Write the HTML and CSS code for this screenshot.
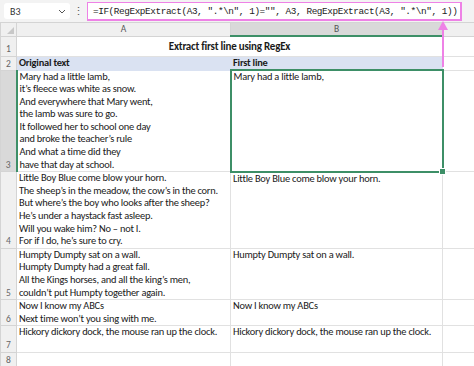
FILE: index.html
```html
<!DOCTYPE html>
<html lang="en">
<head>
    <meta charset="UTF-8">
    <title>Extract first line using RegEx</title>
    <link rel="stylesheet" href="styles.css">
</head>
<body>
    <div class="sheet">
        <div class="formula-bar">
            <div class="name-box">
                <span>B3</span>
                <svg class="chevron" width="8" height="5" viewBox="0 0 8 5"><path d="M1 1l3 3 3-3" fill="none" stroke="#555" stroke-width="1"/></svg>
            </div>
            <div class="dots">&#8942;</div>
            <div class="formula">=IF(RegExpExtract(A3, ".*\n", 1)="", A3, RegExpExtract(A3, ".*\n", 1))</div>
        </div>

        <table class="grid">
            <colgroup>
                <col class="c-num">
                <col class="c-a">
                <col class="c-b">
                <col class="c-c">
            </colgroup>
            <thead>
                <tr class="col-heads">
                    <th class="corner"><span class="tri"></span></th>
                    <th>A</th>
                    <th class="sel-col">B</th>
                    <th></th>
                </tr>
            </thead>
            <tbody>
                <tr class="r1">
                    <td class="num">1</td>
                    <td colspan="2" class="title">Extract first line using RegEx</td>
                    <td></td>
                </tr>
                <tr class="r2">
                    <td class="num">2</td>
                    <td class="head">Original text</td>
                    <td class="head">First line</td>
                    <td></td>
                </tr>
                <tr class="r3">
                    <td class="num sel-row">3</td>
                    <td>Mary had a little lamb,<br>it’s fleece was white as snow.<br>And everywhere that Mary went,<br>the lamb was sure to go.<br>It followed her to school one day<br>and broke the teacher’s rule<br>And what a time did they<br>have that day at school.</td>
                    <td class="active">Mary had a little lamb,<span class="handle"></span></td>
                    <td></td>
                </tr>
                <tr>
                    <td class="num">4</td>
                    <td>Little Boy Blue come blow your horn.<br>The sheep’s in the meadow, the cow’s in the corn.<br>But where’s the boy who looks after the sheep?<br>He’s under a haystack fast asleep.<br>Will you wake him? No – not I.<br>For if I do, he’s sure to cry.</td>
                    <td>Little Boy Blue come blow your horn.</td>
                    <td></td>
                </tr>
                <tr>
                    <td class="num">5</td>
                    <td>Humpty Dumpty sat on a wall.<br>Humpty Dumpty had a great fall.<br>All the Kings horses, and all the king’s men,<br>couldn’t put Humpty together again.</td>
                    <td>Humpty Dumpty sat on a wall.</td>
                    <td></td>
                </tr>
                <tr>
                    <td class="num">6</td>
                    <td>Now I know my ABCs<br>Next time won’t you sing with me.</td>
                    <td>Now I know my ABCs</td>
                    <td></td>
                </tr>
                <tr>
                    <td class="num">7</td>
                    <td>Hickory dickory dock, the mouse ran up the clock.<br>&nbsp;</td>
                    <td>Hickory dickory dock, the mouse ran up the clock.</td>
                    <td></td>
                </tr>
                <tr class="r8">
                    <td class="num">8</td>
                    <td>&nbsp;</td>
                    <td></td>
                    <td></td>
                </tr>
            </tbody>
        </table>

        <svg class="arrow" width="12" height="48" viewBox="0 0 12 48">
            <path d="M6 4V48" stroke="#ee82e6" stroke-width="2"/>
            <path d="M1 11L6 2l5 9z" fill="#ee82e6"/>
        </svg>
    </div>
</body>
</html>
```

FILE: styles.css
```css
body {
    margin: 0;
    background: #fff;
    font-family: Carlito, Lato, "Liberation Sans", sans-serif;
    color: #1a1a1a;
}

.sheet {
    position: relative;
    width: 474px;
    height: 366px;
    overflow: hidden;
}

.formula-bar {
    display: flex;
    align-items: center;
    height: 22px;
    background: #f3f3f3;
    padding: 0 4px;
    box-sizing: border-box;
}

.name-box {
    display: flex;
    align-items: center;
    justify-content: space-between;
    width: 66px;
    height: 16px;
    padding: 0 4px 0 6px;
    box-sizing: border-box;
    background: #fff;
    border-radius: 3px;
    font-size: 10px;
    color: #333;
}

.dots {
    width: 17px;
    text-align: center;
    font-size: 11px;
    color: #555;
}

.formula {
    flex: 1;
    height: 19px;
    line-height: 17px;
    margin-right: 8px;
    padding-left: 5px;
    box-sizing: border-box;
    background: #fff;
    border: 1px solid #ee82e6;
    border-width: 1px 2px 2px 1px;
    font-family: "Liberation Mono", "DejaVu Sans Mono", monospace;
    font-size: 9.4px;
    letter-spacing: -0.42px;
    color: #222;
    white-space: nowrap;
    overflow: hidden;
}

.grid {
    border-collapse: collapse;
    table-layout: fixed;
    width: 474px;
    font-size: 10.4px;
    letter-spacing: -0.22px;
    line-height: 12.6px;
}

.c-num { width: 16px; }
.c-a { width: 214px; }
.c-b { width: 212px; }
.c-c { width: 32px; }

.grid th, .grid td {
    border: 1px solid #e1e1e1;
    padding: 0 2px;
    vertical-align: top;
    text-align: left;
    white-space: nowrap;
    overflow: hidden;
}

.col-heads th {
    height: 12px;
    line-height: 12px;
    background: #f0f0f0;
    font-weight: normal;
    font-size: 9.5px;
    letter-spacing: 0;
    color: #555;
    text-align: center;
    vertical-align: middle;
    border-color: #d4d4d4;
}

.col-heads .sel-col {
    background: #d9d9d9;
    border-bottom: 2px solid #3d8f67;
}

.corner {
    position: relative;
}

.tri {
    position: absolute;
    right: 2px;
    bottom: 2px;
    border-left: 7px solid transparent;
    border-bottom: 7px solid #c8c8c8;
}

.grid .num {
    background: #f0f0f0;
    color: #666;
    font-size: 9.5px;
    letter-spacing: 0;
    text-align: center;
    vertical-align: bottom;
    padding: 0;
    border-color: #d4d4d4;
}

.grid .num.sel-row {
    background: #d9d9d9;
    border-right: 2px solid #3d8f67;
}

.r1 td {
    height: 17px;
    vertical-align: bottom;
}

.grid .title {
    text-align: center;
    font-size: 11px;
    font-weight: bold;
    padding-bottom: 2px;
}

.r2 td {
    height: 12px;
    line-height: 12px;
}

.r2 td.head {
    background: #dae2f2;
    font-weight: bold;
    border-color: #dae2f2;
}

.grid .r8 .num {
    vertical-align: top;
    line-height: 12px;
    padding-top: 1px;
}

.grid .active {
    position: relative;
    border: 2px solid #3d8f67;
    overflow: visible;
}

.handle {
    position: absolute;
    right: -4px;
    bottom: -4px;
    width: 5px;
    height: 5px;
    background: #3d8f67;
    border: 1px solid #fff;
}

.arrow {
    position: absolute;
    left: 437px;
    top: 19px;
}
```
